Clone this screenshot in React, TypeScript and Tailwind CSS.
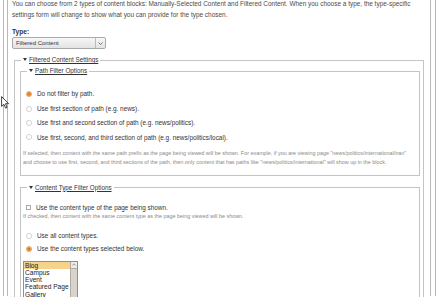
import React from "react";

const Tri = () => (
  <svg width="4" height="3" viewBox="0 0 4 3" className="inline-block mr-[2px] align-[1px]">
    <path d="M0 0H4L2 3Z" fill="#333" />
  </svg>
);

function Radio({ checked }: { checked?: boolean }) {
  return checked ? (
    <svg width="6" height="6" viewBox="0 0 6 6" className="shrink-0">
      <circle cx="3" cy="3" r="2.6" fill="#f3b45c" stroke="#c98a3c" strokeWidth="0.5" />
      <circle cx="3" cy="3" r="1.5" fill="#d9761e" />
    </svg>
  ) : (
    <svg width="6" height="6" viewBox="0 0 6 6" className="shrink-0">
      <circle cx="3" cy="3" r="2.6" fill="#fff" stroke="#aaaaaa" strokeWidth="0.5" />
    </svg>
  );
}

function Legend({ children, ml }: { children: React.ReactNode; ml: string }) {
  return (
    <legend className={`${ml} px-[2px] text-[6.3px] leading-[8px] text-[#333]`}>
      <Tri />
      <span className="underline">{children}</span>
    </legend>
  );
}

export default function App() {
  const pathOpts = [
    "Do not filter by path.",
    "Use first section of path (e.g. news).",
    "Use first and second section of path (e.g. news/politics).",
    "Use first, second, and third section of path (e.g. news/politics/local).",
  ];
  const types = ["Blog", "Campus", "Event", "Featured Page", "Gallery", "News"];
  return (
    <div className="relative w-[440px] h-[297px] overflow-hidden bg-white font-['Liberation_Sans',Arial,sans-serif]">
      <div className="ml-[3px] mr-[4px] h-full border-x border-[#b8b8b8]">
        <div className="ml-[3px] mr-[4px] h-full border-x border-[#b8b8b8]">
          <div className="pl-[4px]">
            <div className="-mt-[1px] text-[6.45px] leading-[10.5px] text-[#4a4a4a] whitespace-nowrap">
              <div>
                You can choose from 2 types of content blocks: Manually-Selected Content and Filtered Content. When you choose a type, the type-specific
              </div>
              <div>settings form will change to show what you can provide for the type chosen.</div>
            </div>
            <div className="mt-[8px] text-[6.6px] leading-[8px] font-bold text-[#333]">Type:</div>
            <div className="mt-[1px] flex h-[12px] w-[94px] items-stretch rounded-[2px] border border-[#aaa] bg-gradient-to-b from-[#f7f7f7] to-[#e3e3e3]">
              <div className="flex flex-1 items-center pl-[3px] text-[6px] text-[#333]">Filtered Content</div>
              <div className="flex w-[10px] items-center justify-center border-l border-[#bbb]">
                <svg width="5" height="3" viewBox="0 0 5 3">
                  <path d="M0.5 0.5L2.5 2.5L4.5 0.5" fill="none" stroke="#555" strokeWidth="0.8" />
                </svg>
              </div>
            </div>
          </div>

          <fieldset className="mx-[6px] mt-[7px] border border-[#c4c4c4] pl-[5px] pr-[3px] pt-[3px]">
            <Legend ml="ml-[1px]">Filtered Content Settings</Legend>

            <fieldset className="border border-[#c4c4c4] pl-[2px] pr-[2px]">
              <Legend ml="ml-[4px]">Path Filter Options</Legend>
              <div className="pt-[12px] pl-[3px]">
                {pathOpts.map((t, i) => (
                  <div key={i} className="flex h-[14.4px] items-center gap-[5px] text-[6.4px] text-[#333]">
                    <Radio checked={i === 0} />
                    <span className="whitespace-nowrap">{t}</span>
                  </div>
                ))}
              </div>
              <div className="mt-[4px] pb-[8px] text-[5.4px] leading-[9px] text-[#8a8a8a] whitespace-nowrap">
                <div>
                  If selected, then content with the same path prefix as the page being viewed will be shown. For example, if you are viewing page "news/politics/international/iran"
                </div>
                <div>
                  and choose to use first, second, and third sections of the path, then only content that has paths like "news/politics/international" will show up in the block.
                </div>
              </div>
            </fieldset>

            <fieldset className="mt-[8px] border border-[#c4c4c4] pl-[2px] pr-[2px]">
              <Legend ml="ml-[4px]">Content Type Filter Options</Legend>
              <div className="mt-[12px] flex h-[8px] items-center gap-[5px] pl-[3px] text-[6.4px] text-[#333]">
                <span className="h-[5px] w-[5px] shrink-0 border border-[#aaa] bg-white" />
                <span className="whitespace-nowrap">Use the content type of the page being shown.</span>
              </div>
              <div className="text-[5.4px] leading-[9px] text-[#8a8a8a] whitespace-nowrap">
                If checked, then content with the same content type as the page being viewed will be shown.
              </div>
              <div className="mt-[8.5px] pl-[3px]">
                {["Use all content types.", "Use the content types selected below."].map((t, i) => (
                  <div key={i} className="flex h-[13px] items-center gap-[5px] text-[6.4px] text-[#333]">
                    <Radio checked={i === 1} />
                    <span className="whitespace-nowrap">{t}</span>
                  </div>
                ))}
              </div>
              <div className="mt-[5.5px] flex h-[50px] w-[55px] border border-[#8f8f8f] bg-white">
                <div className="flex-1 overflow-hidden">
                  {types.map((t, i) => (
                    <div
                      key={t}
                      className={`px-[1px] text-[6.6px] leading-[7.25px] text-[#222] whitespace-nowrap ${i === 0 ? "bg-[#f6d38c]" : ""}`}
                    >
                      {t}
                    </div>
                  ))}
                </div>
                <div className="flex w-[7px] flex-col border-l border-[#b0aca4] bg-[#d8d4cc]">
                  <div className="flex h-[7px] items-center justify-center border-b border-[#b0aca4] bg-[#eeece8]">
                    <svg width="4" height="3" viewBox="0 0 4 3">
                      <path d="M0.4 2.5L2 0.8L3.6 2.5" fill="none" stroke="#666" strokeWidth="0.6" />
                    </svg>
                  </div>
                </div>
              </div>
            </fieldset>
          </fieldset>
        </div>
      </div>

      <svg className="absolute left-[1px] top-[96px]" width="9" height="13" viewBox="0 0 9 13">
        <path
          d="M0.6 0.6L0.6 10.4L2.9 8.3L4.6 12.1L6.1 11.4L4.5 7.7L7.6 7.7Z"
          fill="#fff"
          stroke="#111"
          strokeWidth="0.8"
          strokeLinejoin="round"
        />
      </svg>
    </div>
  );
}
